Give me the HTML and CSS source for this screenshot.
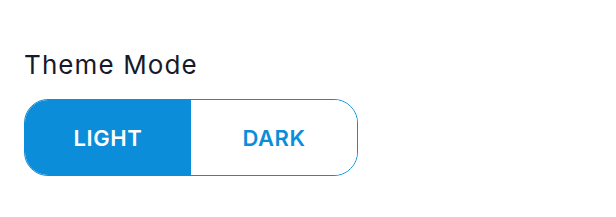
FILE: index.html
```html
<!DOCTYPE html>
<html lang="en">
<head>
    <meta charset="UTF-8">
    <title>Theme Mode</title>
    <link rel="stylesheet" href="styles.css">
</head>
<body>
    <div class="settings">
        <h2 class="label">Theme Mode</h2>
        <div class="toggle">
            <button class="active">LIGHT</button>
            <button>DARK</button>
        </div>
    </div>
</body>
</html>
```

FILE: styles.css
```css
body {
    font-family: Inter, "Open Sans", sans-serif;
    margin: 0;
    padding: 0;
    background-color: #ffffff;
}
.settings {
    padding: 49px 24px 0 24px;
}
.label {
    margin: 0 0 18px 0;
    font-size: 26px;
    font-weight: 400;
    line-height: 32px;
    letter-spacing: 1.1px;
    color: #161a2b;
}
.toggle {
    display: flex;
    width: 334px;
    height: 77px;
    border: 1px solid #0b8dda;
    border-radius: 24px;
    overflow: hidden;
    box-sizing: border-box;
}
.toggle button {
    flex: 1 1 0;
    border: none;
    background-color: #ffffff;
    color: #0b8dda;
    font-family: inherit;
    font-size: 22px;
    font-weight: 600;
    letter-spacing: 0.6px;
    cursor: pointer;
}
.toggle button.active {
    background-color: #0b8dda;
    color: #ffffff;
}
```
